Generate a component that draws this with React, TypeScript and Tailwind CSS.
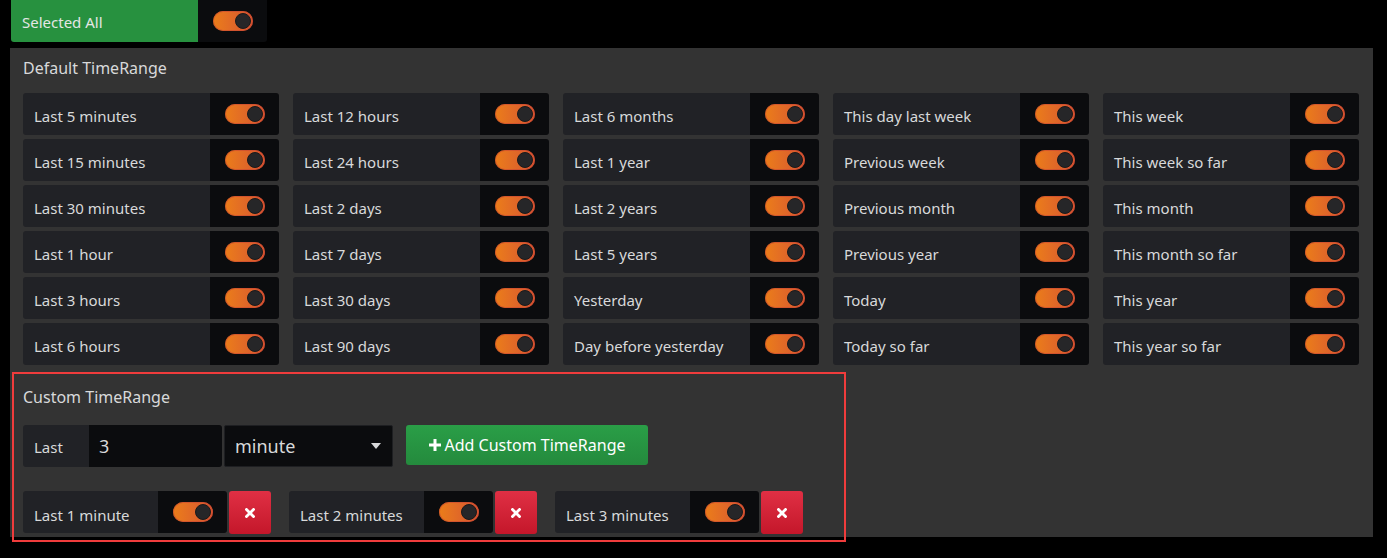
import { type ReactNode } from 'react';

const DEFAULT_RANGES = [
  ['Last 5 minutes', 'Last 12 hours', 'Last 6 months', 'This day last week', 'This week'],
  ['Last 15 minutes', 'Last 24 hours', 'Last 1 year', 'Previous week', 'This week so far'],
  ['Last 30 minutes', 'Last 2 days', 'Last 2 years', 'Previous month', 'This month'],
  ['Last 1 hour', 'Last 7 days', 'Last 5 years', 'Previous year', 'This month so far'],
  ['Last 3 hours', 'Last 30 days', 'Yesterday', 'Today', 'This year'],
  ['Last 6 hours', 'Last 90 days', 'Day before yesterday', 'Today so far', 'This year so far'],
];

const CUSTOM_RANGES = ['Last 1 minute', 'Last 2 minutes', 'Last 3 minutes'];

function Toggle() {
  return (
    <div className="w-[40px] h-[20px] rounded-full bg-gradient-to-r from-[#eb7d18] to-[#d6532f] flex items-center justify-end pr-[2px] shadow-[inset_0_0_0_1px_rgba(200,70,50,0.6)]">
      <div className="w-[16px] h-[16px] rounded-full bg-[#262628] border border-[#1a1a1c]" />
    </div>
  );
}

function SwitchCell({ label, labelWidth }: { label: string; labelWidth?: string }) {
  return (
    <div className="h-[42px] flex rounded-[3px] overflow-hidden">
      <div className={`${labelWidth ?? 'flex-1'} bg-[#212226] flex items-center pl-[11px] pt-[4px] text-[15px] text-[#d8d9da] whitespace-nowrap`}>
        {label}
      </div>
      <div className="w-[69px] bg-[#0b0c0e] flex items-center justify-center">
        <Toggle />
      </div>
    </div>
  );
}

function SectionTitle({ children }: { children: ReactNode }) {
  return <div className="h-[24px] leading-[24px] text-[16px] text-[#d8d9da]">{children}</div>;
}

export default function App() {
  return (
    <div className="w-[1387px] h-[558px] bg-black overflow-hidden font-['Noto_Sans',sans-serif]">
      {/* Selected all */}
      <div className="ml-[11px] w-[256px] h-[42px] flex rounded-b-[3px] overflow-hidden">
        <div className="w-[187px] bg-[#27913f] flex items-center pl-[11px] pt-[2px] text-[15px] text-[#e4e6e4]">Selected All</div>
        <div className="flex-1 bg-[#0b0c0e] flex items-center justify-center">
          <Toggle />
        </div>
      </div>

      <div className="mt-[6px] ml-[10px] w-[1363px] h-[489px] bg-[#333333] pl-[13px] pr-[14px] pt-[8px]">
        <SectionTitle>Default TimeRange</SectionTitle>
        <div className="mt-[13px] grid grid-cols-5 gap-x-[14px] gap-y-[4px]">
          {DEFAULT_RANGES.flat().map((r) => (
            <SwitchCell key={r} label={r} />
          ))}
        </div>

        {/* Custom */}
        <div className="mt-[7px] -ml-[11px] w-[834px] border-2 border-[#f03c3c] pl-[9px] pt-[11px] pb-[6px]">
          <SectionTitle>Custom TimeRange</SectionTitle>
          <div className="mt-[16px] flex items-center">
            <div className="h-[42px] flex rounded-[3px] overflow-hidden">
              <div className="w-[66px] bg-[#212226] flex items-center pl-[11px] pt-[2px] text-[15px] text-[#d8d9da]">Last</div>
              <div className="w-[133px] bg-[#0b0c0e] flex items-center pl-[10px] text-[18px] text-[#d8d9da]">3</div>
            </div>
            <div className="ml-[2px] w-[169px] h-[42px] bg-[#0b0c0e] border border-[#1e1f22] rounded-[2px] flex items-center justify-between pl-[10px] pr-[11px] text-[18px] text-[#d8d9da]">
              <span>minute</span>
              <svg width="10" height="6" viewBox="0 0 10 6"><path d="M0 0h10L5 6z" fill="#d8d9da" /></svg>
            </div>
            <button className="ml-[13px] -mt-[2px] w-[242px] h-[40px] rounded-[3px] bg-gradient-to-b from-[#2a9e47] to-[#248a3d] flex items-center justify-center gap-[4px] text-[16px] text-white">
              <svg width="12" height="12" viewBox="0 0 12 12"><path d="M4.5 0h3v4.5H12v3H7.5V12h-3V7.5H0v-3h4.5z" fill="#fff" /></svg>
              <span>Add Custom TimeRange</span>
            </button>
          </div>
          <div className="mt-[24px] flex gap-x-[18px]">
            {CUSTOM_RANGES.map((r) => (
              <div key={r} className="flex gap-[2px]">
                <div className="w-[204px]">
                  <SwitchCell label={r} labelWidth="w-[135px] pt-[6px]" />
                </div>
                <button className="w-[42px] h-[43px] rounded-[3px] bg-gradient-to-b from-[#e02f44] to-[#c4162a] flex items-center justify-center">
                  <svg width="10" height="10" viewBox="0 0 10 10"><path d="M1.5 1.5l7 7M8.5 1.5l-7 7" stroke="#fff" strokeWidth="2.8" strokeLinecap="square" /></svg>
                </button>
              </div>
            ))}
          </div>
        </div>
      </div>
    </div>
  );
}
